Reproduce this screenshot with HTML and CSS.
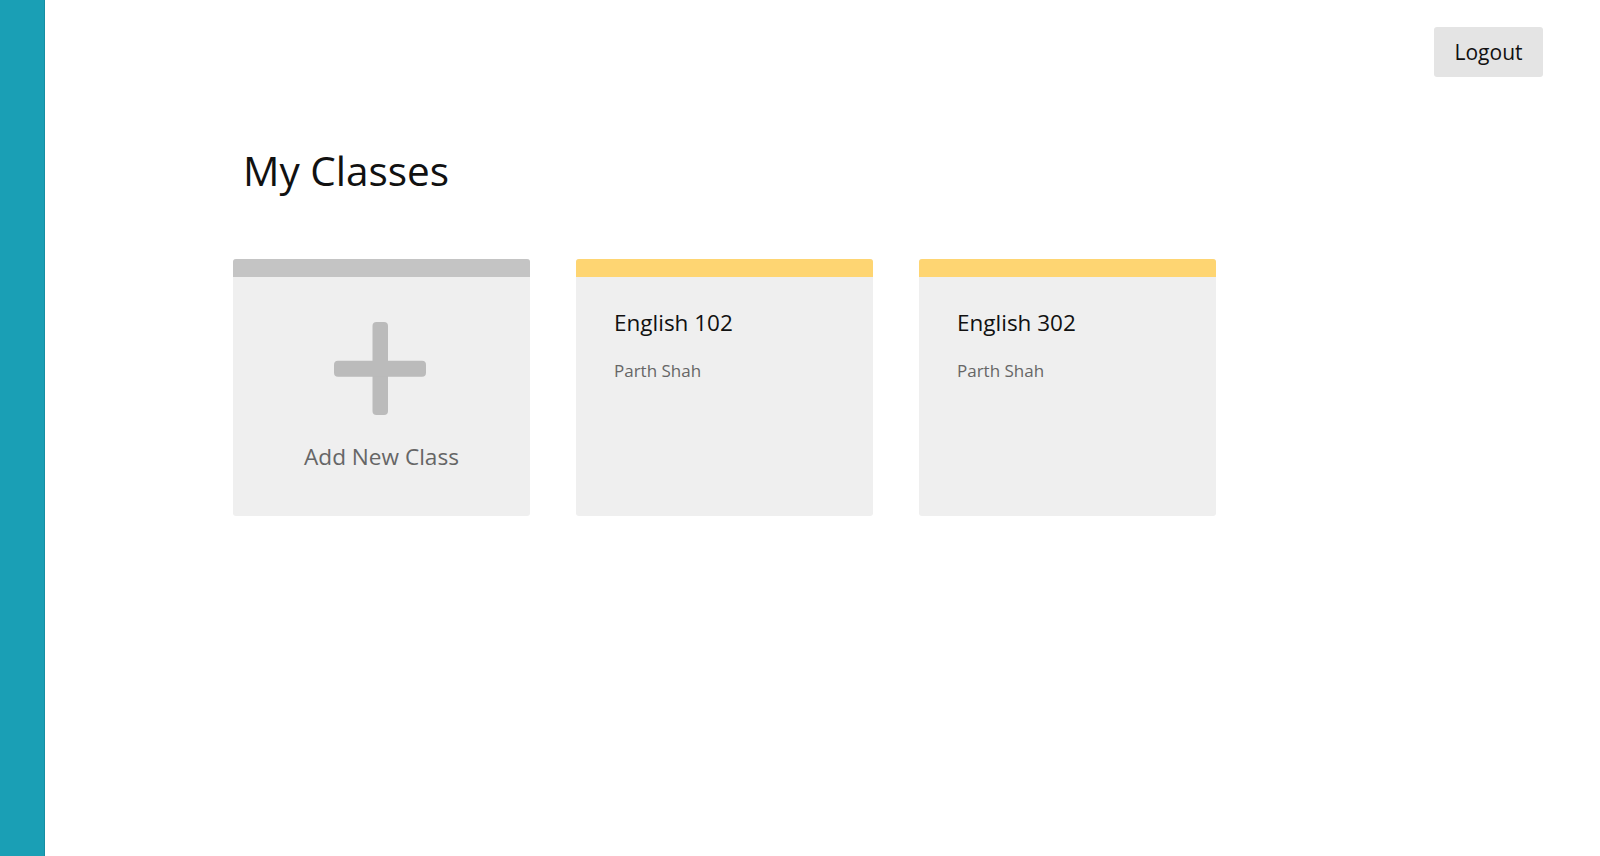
FILE: index.html
```html
<!DOCTYPE html>
<html lang="en">
<head>
<meta charset="utf-8">
<title>My Classes</title>
<link rel="stylesheet" href="styles.css">
</head>
<body>
<aside class="sidebar"></aside>
<main class="main">
  <header class="topbar">
    <button class="logout">Logout</button>
  </header>
  <section class="content">
    <h1 class="title">My Classes</h1>
    <div class="cards">
      <div class="card card-add">
        <div class="band band-gray"></div>
        <div class="add-body">
          <svg class="plus" width="92" height="93" viewBox="0 0 92 93" aria-hidden="true">
            <rect x="38.5" y="0" width="15.5" height="93" rx="4" fill="#bbbbbb"/>
            <rect x="0" y="38.8" width="92" height="16" rx="4" fill="#bbbbbb"/>
          </svg>
          <div class="add-label">Add New Class</div>
        </div>
      </div>
      <div class="card">
        <div class="band band-yellow"></div>
        <div class="card-body">
          <div class="class-name">English 102</div>
          <div class="teacher">Parth Shah</div>
        </div>
      </div>
      <div class="card">
        <div class="band band-yellow"></div>
        <div class="card-body">
          <div class="class-name">English 302</div>
          <div class="teacher">Parth Shah</div>
        </div>
      </div>
    </div>
  </section>
</main>
</body>
</html>
```
FILE: styles.css
```css
* { box-sizing: border-box; }
html, body { height: 100%; }
body {
  margin: 0;
  display: flex;
  background: #ffffff;
  font-family: "Open Sans", "Liberation Sans", sans-serif;
  color: #111111;
}
.sidebar {
  width: 45px;
  flex: 0 0 45px;
  min-height: 100vh;
  background: #1a9fb5;
  border-right: 1px solid #168ea3;
}
.main {
  flex: 1;
  display: flex;
  flex-direction: column;
}
.topbar {
  display: flex;
  justify-content: flex-end;
  padding: 27px 57px 0 0;
}
.logout {
  height: 50px;
  width: 109px;
  padding: 0;
  border: none;
  border-radius: 3px;
  background: #e4e4e4;
  font-family: "Open Sans", "Liberation Sans", sans-serif;
  font-size: 21px;
  line-height: 50px;
  color: #111111;
  cursor: pointer;
}
.content {
  padding-left: 188px;
}
.title {
  margin: 74px 0 0 10px;
  font-size: 40.5px;
  line-height: 40px;
  font-weight: 400;
  color: #111111;
}
.cards {
  display: flex;
  gap: 46px;
  margin-top: 68px;
}
.card {
  width: 297px;
  height: 257px;
  background: #efefef;
  border-radius: 3px;
  overflow: hidden;
  display: flex;
  flex-direction: column;
}
.band { height: 18px; flex: 0 0 18px; }
.band-gray { background: #c4c4c4; }
.band-yellow { background: #fed572; }
.add-body {
  display: flex;
  flex-direction: column;
  align-items: center;
  padding-top: 45px;
}
.plus { display: block; margin-left: -3px; }
.add-label {
  margin-top: 27px;
  font-size: 22.6px;
  line-height: 30px;
  color: #666666;
}
.card-body {
  padding: 31px 38px 0 38px;
}
.class-name {
  font-size: 22.5px;
  line-height: 30px;
  color: #111111;
}
.teacher {
  margin-top: 21px;
  font-size: 17px;
  line-height: 23px;
  color: #666666;
}
```
